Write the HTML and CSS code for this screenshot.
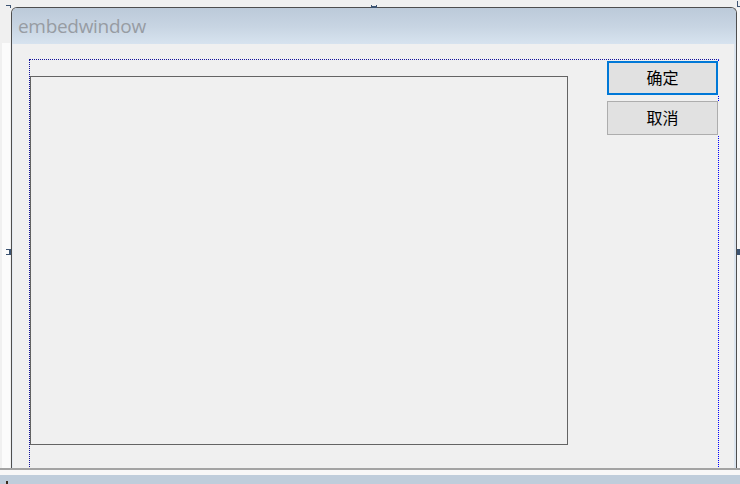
FILE: index.html
```html
<!DOCTYPE html>
<html lang="zh">
<head>
<meta charset="utf-8">
<title>embedwindow</title>
<link rel="stylesheet" href="styles.css">
</head>
<body>
<div class="page">
  <div class="stage">
    <div class="gutter-left"><div class="strip"></div></div>
    <div class="window">
      <div class="titlebar"><span class="title">embedwindow</span></div>
      <div class="client">
        <div class="frame">
          <div class="panel"></div>
          <div class="buttons">
            <button class="btn btn-focused">确定</button>
            <button class="btn">取消</button>
          </div>
        </div>
      </div>
    </div>
    <div class="gutter-right"></div>
  </div>
  <div class="footer"><div class="footer-bar"></div></div>

  <span class="handle handle-tl"></span>
  <span class="handle handle-top"></span>
  <span class="handle handle-tr"></span>
  <span class="handle handle-left"></span>
  <span class="handle handle-right"></span>
  <span class="handle handle-bl"></span>
</div>
</body>
</html>
```

FILE: styles.css
```css
* { box-sizing: border-box; }

html, body {
  margin: 0;
  padding: 0;
  background: #f0f0f0;
}

.page {
  position: relative;
  width: 740px;
  height: 484px;
  overflow: hidden;
  background: #f0f0f0;
  font-family: "Open Sans", "Noto Sans", sans-serif;
}

.stage {
  display: flex;
  height: 468px;
  padding-top: 7px;
}

.gutter-left {
  width: 11px;
  padding-left: 2px;
  padding-right: 1px;
  padding-top: 36px;
  display: flex;
}

.strip {
  flex: 1;
  background: #fbfbfb;
}

.gutter-right {
  flex: 1;
  background: #f7f7f7;
  margin-top: 1px;
}

.window {
  width: 726px;
  height: 461px;
  border: 1px solid #4e4e4e;
  border-bottom: none;
  border-radius: 6px 6px 0 0;
  display: flex;
  flex-direction: column;
  overflow: hidden;
  background: #f0f0f0;
}

.titlebar {
  height: 36px;
  flex: none;
  background: linear-gradient(to bottom, #bccad9 0%, #c7d4e2 50%, #d7e3ef 100%);
  padding-left: 6px;
  padding-top: 1px;
  line-height: 34px;
}

.title {
  font-size: 19px;
  color: #979ca3;
  letter-spacing: -0.3px;
}

.client {
  flex: 1;
  background: #f0f0f0;
  border-left: 1px solid #e4eaf1;
  border-right: 2px solid #dbe4ee;
  padding-left: 16px;
  padding-top: 15px;
  overflow: hidden;
}

.frame {
  width: 690px;
  height: 430px;
  border-top: 1px dotted #10109a;
  border-left: 1px dotted #10109a;
  border-right: 1px dotted #0000ff;
  display: flex;
  justify-content: space-between;
  align-items: flex-start;
}

.panel {
  width: 538px;
  height: 369px;
  margin-top: 16px;
  border: 1px solid #646464;
  background: #f0f0f0;
}

.buttons {
  margin-top: 1px;
  display: flex;
  flex-direction: column;
  gap: 6px;
}

.btn {
  width: 111px;
  height: 34px;
  margin: 0;
  padding: 0 0 2px 0;
  border: 1px solid #adadad;
  background: #e1e1e1;
  color: #000;
  font-family: "Noto Sans CJK SC", "Noto Sans", sans-serif;
  font-size: 16px;
  line-height: 28px;
  box-shadow: 1px 0 0 #f0f0f0;
}

.btn-focused {
  border: 2px solid #0078d7;
}

.footer {
  height: 16px;
  border-top: 2px solid #a3a3a3;
  padding-top: 5px;
  background: #f7f7f7;
}

.footer-bar {
  height: 9px;
  background: #bfcddb;
}

/* designer selection handles */
.handle {
  position: absolute;
  border-color: #3d5472;
  border-style: solid;
  border-width: 0;
}

.handle-tl {
  left: 6px;
  top: 5px;
  width: 5px;
  height: 3px;
  border-top-width: 1px;
  border-right-width: 1px;
}

.handle-top {
  left: 371px;
  top: 5px;
  width: 6px;
  height: 3px;
  border-left-width: 1px;
  border-right-width: 1px;
  border-bottom-width: 2px;
}

.handle-tr {
  left: 737px;
  top: 1px;
  width: 3px;
  height: 6px;
  border-left-width: 1px;
  border-bottom-width: 1px;
}

.handle-left {
  left: 6px;
  top: 249px;
  width: 5px;
  height: 6px;
  border-top-width: 1px;
  border-bottom-width: 1px;
  border-right-width: 2px;
}

.handle-right {
  left: 737px;
  top: 249px;
  width: 3px;
  height: 6px;
  background: #3d5472;
}

.handle-bl {
  left: 6px;
  top: 481px;
  width: 2px;
  height: 3px;
  background: #3a2a1a;
}
```
